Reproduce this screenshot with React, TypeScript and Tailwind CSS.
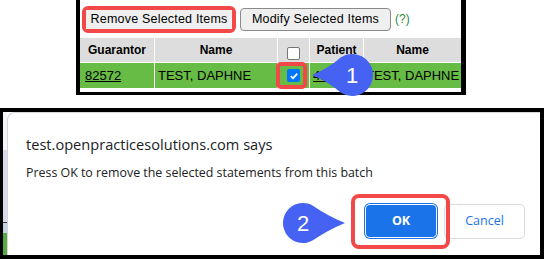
import React from "react";

const green = "bg-[#67bc46]";

function Check({ checked }: { checked: boolean }) {
  return checked ? (
    <div className="w-[13px] h-[13px] rounded-[2px] bg-[#0075ff] flex items-center justify-center">
      <svg width="10" height="10" viewBox="0 0 10 10">
        <path d="M1.8 5.2 L4 7.3 L8.3 2.6" fill="none" stroke="white" strokeWidth="1.8" />
      </svg>
    </div>
  ) : (
    <div className="w-[13px] h-[13px] rounded-[2px] border border-[#767676] bg-white" />
  );
}

function App() {
  return (
    <div className="w-[544px] h-[259px] bg-white flex flex-col overflow-hidden font-['Liberation_Sans',Arial,sans-serif]">
      {/* top: table screenshot */}
      <div className="relative ml-[76px] w-[390px] h-[95px] shrink-0 border-l-4 border-r-[5px] border-b-[3px] border-black flex flex-col">
        <div className="h-[38px] flex items-center pl-[2px] text-[12.5px] text-black">
          <div className="border-4 border-[#f24848] rounded-[6px]">
            <div className="w-[146px] h-[19px] bg-[#efefef] flex items-center justify-center tracking-[0.2px]">
              Remove Selected Items
            </div>
          </div>
          <div className="ml-[4px] w-[151px] h-[23px] bg-[#efefef] border border-[#8a8a8a] rounded-[4px] flex items-center justify-center tracking-[0.2px]">
            Modify Selected Items
          </div>
          <span className="ml-[4px] text-[12px] text-[#2e8b3a]">(?)</span>
        </div>

        <div className="grid grid-cols-[74px_122px_31px_53px_97px] gap-px bg-white">
          <div className="h-[24px] bg-[#dddddd] flex items-center justify-center font-bold text-[12px]">Guarantor</div>
          <div className="h-[24px] bg-[#dddddd] flex items-center justify-center font-bold text-[12px]">Name</div>
          <div className="h-[24px] bg-[#dddddd] flex justify-center pt-[9px]">
            <Check checked={false} />
          </div>
          <div className="h-[24px] bg-[#dddddd] flex items-center justify-center font-bold text-[12px]">Patient</div>
          <div className="h-[24px] bg-[#dddddd] flex items-center justify-center font-bold text-[12px]">Name</div>

          <div className={`h-[25px] ${green} flex items-center pl-[5px] text-[13px] underline`}>82572</div>
          <div className={`h-[25px] ${green} flex items-center pl-[3px] text-[13px]`}>TEST, DAPHNE</div>
          <div className={`relative h-[25px] ${green} flex items-center justify-center`}>
            <Check checked={true} />
            <div className="absolute -left-[2px] -top-px w-[31px] h-[27px] border-4 border-[#f24848] rounded-[5px]" />
          </div>
          <div className={`h-[25px] ${green} flex items-center pl-[3px] text-[13px] underline`}>48120</div>
          <div className={`h-[25px] ${green} flex items-center pl-[2px] text-[13px] whitespace-nowrap overflow-hidden`}>TEST, DAPHNE</div>
        </div>

        <svg className="absolute left-[232px] top-[53px]" width="62" height="44" viewBox="0 0 62 44">
          <path d="M0 22 Q17 15 28.97 4.13 A21 21 0 1 1 28.97 39.87 Q17 29 0 22 Z" fill="#4562f2" />
          <text x="40" y="30" textAnchor="middle" fill="white" fontSize="22" fontFamily="Liberation Sans, Arial, sans-serif">1</text>
        </svg>
      </div>

      {/* bottom: browser confirm dialog */}
      <div className="relative mt-[13px] flex-1 border-t-4 border-r-4 border-b-4 border-l-[3px] border-black flex">
        <div className="w-[4px] flex flex-col">
          <div className="h-[38px] bg-[#f3f5f8]" />
          <div className="flex-1 bg-[#d3dbe8]" />
          <div className="h-px bg-[#333]" />
          <div className="h-[10px] bg-[#c6d1e2]" />
          <div className="h-[22px] bg-[#5aa83f]" />
        </div>
        <div className="flex-1 bg-white rounded-tl-[8px] border-l border-t border-[#d6d6d6] pl-[18px] pr-[15px] pt-[21px] flex flex-col font-['Open_Sans',sans-serif]">
          <div className="text-[14.6px] leading-[20px] text-[#202124]">test.openpracticesolutions.com says</div>
          <div className="mt-[10px] text-[12.4px] leading-[18px] text-[#202124]">Press OK to remove the selected statements from this batch</div>
          <div className="mt-[21px] flex justify-end items-center gap-[6px]">
            <div className="relative m-[2px]">
              <div className="w-[70px] h-[32px] rounded-[4px] bg-[#1a73e8] shadow-[0_0_0_1px_white,0_0_0_2px_#1a73e8] flex items-center justify-center text-white font-bold text-[12.5px]">
                OK
              </div>
              <div className="absolute -left-[15px] -top-[11px] w-[99px] h-[55px] border-4 border-[#f24848] rounded-[8px]" />
            </div>
            <div className="w-[81px] h-[35px] rounded-[5px] border border-[#dadce0] flex items-center justify-center text-[#1a73e8] text-[12.5px]">
              Cancel
            </div>
          </div>
        </div>

        <svg className="absolute left-[280px] top-[91px]" width="63" height="40" viewBox="0 0 63 40">
          <path d="M62 20 Q45 27 29.52 37.59 A20 20 0 1 1 29.52 2.41 Q45 13 62 20 Z" fill="#4562f2" />
          <text x="20" y="28" textAnchor="middle" fill="white" fontSize="22" fontFamily="Liberation Sans, Arial, sans-serif">2</text>
        </svg>
      </div>
    </div>
  );
}

export default App;
